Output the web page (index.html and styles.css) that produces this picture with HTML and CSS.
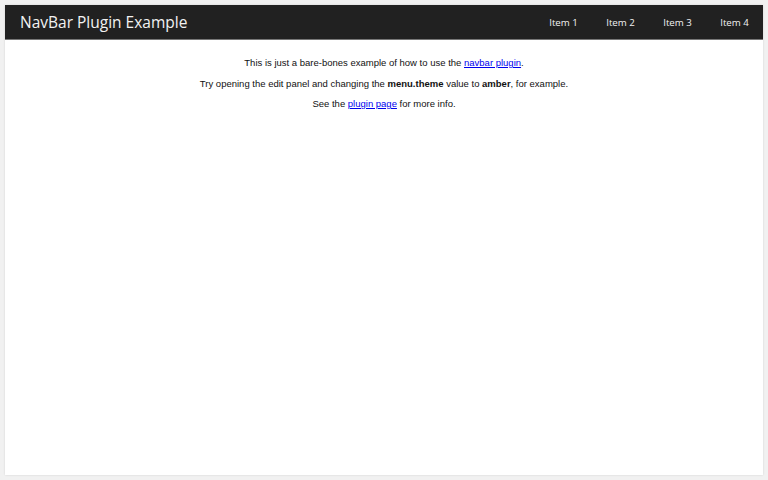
FILE: index.html
```html
<!DOCTYPE html>
<html>
<head>
<meta charset="utf-8">
<link rel="stylesheet" href="styles.css">
</head>
<body>
<div class="card">
  <nav class="navbar">
    <div class="brand">NavBar Plugin Example</div>
    <ul class="menu">
      <li>Item 1</li>
      <li>Item 2</li>
      <li>Item 3</li>
      <li>Item 4</li>
    </ul>
  </nav>
  <main class="content">
    <p>This is just a bare-bones example of how to use the <a href="#">navbar plugin</a>.</p>
    <p>Try opening the edit panel and changing the <b>menu.theme</b> value to <b>amber</b>, for example.</p>
    <p>See the <a href="#">plugin page</a> for more info.</p>
  </main>
</div>
</body>
</html>
```
FILE: styles.css
```css
html, body { margin: 0; padding: 0; }
body {
  background: #f1f1f1;
  padding: 5px;
  height: 480px;
  box-sizing: border-box;
}
.card {
  background: #fff;
  height: 470px;
  box-shadow: 0 0 2px rgba(0,0,0,0.12);
  display: flex;
  flex-direction: column;
}
.navbar {
  background: #212121;
  height: 34px;
  border-bottom: 1px solid #777;
  display: flex;
  align-items: center;
  justify-content: space-between;
  padding: 0 0 0 15px;
  font-family: "Open Sans", sans-serif;
  color: #f2f2f2;
}
.brand {
  font-size: 15.5px;
}
.menu {
  list-style: none;
  margin: 0;
  padding: 0;
  display: flex;
  font-size: 9.7px;
}
.menu li {
  width: 57px;
  text-align: center;
}
.content {
  font-family: "Liberation Sans", Arial, sans-serif;
  font-size: 9.5px;
  color: #111;
  text-align: center;
  padding-top: 16px;
}
.content p {
  margin: 0 0 7.5px;
  line-height: 13px;
}
.content a { color: #00e; }
```
